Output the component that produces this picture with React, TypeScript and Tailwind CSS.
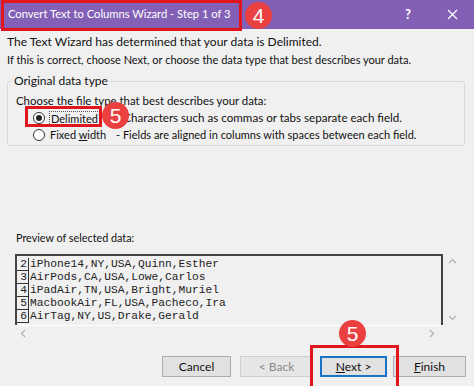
import React from "react";

const rows = [
  ["2", "iPhone14,NY,USA,Quinn,Esther"],
  ["3", "AirPods,CA,USA,Lowe,Carlos"],
  ["4", "iPadAir,TN,USA,Bright,Muriel"],
  ["5", "MacbookAir,FL,USA,Pacheco,Ira"],
  ["6", "AirTag,NY,US,Drake,Gerald"],
];

function Badge({ n, className }: { n: string; className: string }) {
  return (
    <div
      className={`absolute w-[27px] h-[27px] rounded-full bg-[#ea4040] text-white flex items-center justify-center text-[21px] leading-none ${className}`}
      style={{ fontFamily: '"Liberation Sans", Arial, sans-serif' }}
    >
      {n}
    </div>
  );
}

function Radio({ checked }: { checked?: boolean }) {
  return (
    <div className="w-[12px] h-[12px] rounded-full border border-[#333] bg-white flex items-center justify-center shrink-0">
      {checked && <div className="w-[6px] h-[6px] rounded-full bg-[#222]" />}
    </div>
  );
}

export default function App() {
  return (
    <div
      className="relative w-[474px] h-[386px] overflow-hidden bg-[#f0f0f0] text-[#111] flex flex-col"
      style={{ fontFamily: 'Lato, "Noto Sans", sans-serif' }}
    >
      {/* title bar */}
      <div className="h-[29px] bg-[#8360b6] flex items-center text-white shrink-0">
        <div className="pl-[8px] text-[11.2px]">Convert Text to Columns Wizard - Step 1 of 3</div>
        <div className="ml-auto flex items-center">
          <span className="text-[13px] font-bold mr-[36px]">?</span>
          <svg width="11" height="11" viewBox="0 0 11 11" className="mr-[16px]">
            <path d="M1 1L10 10M10 1L1 10" stroke="white" strokeWidth="1.2" />
          </svg>
        </div>
      </div>

      <div className="flex flex-col px-[7px] text-[12px] leading-[18px]">
        <div className="mt-[4px]">The Text Wizard has determined that your data is Delimited.</div>
        <div className="text-[11px]">If this is correct, choose Next, or choose the data type that best describes your data.</div>

        {/* group box */}
        <div className="relative mt-[12px] mr-[2px] h-[65px] border border-[#d9d9d9] rounded-[2px] pt-[10px] pl-[8px]">
          <div className="absolute -top-[10px] left-[4px] bg-[#f0f0f0] px-[2px]">Original data type</div>
          <div className="text-[11.4px]">Choose the file type that best describes your data:</div>
          <div className="flex items-center h-[16px] pl-[17px]">
            <Radio checked />
            <span className="ml-[4px] w-[51px] border border-dotted border-[#555] px-[1px] leading-[13px] text-[11px]">
              <span className="underline">D</span>elimited
            </span>
            <span className="ml-[16px] text-[11.6px]">- Characters such as commas or tabs separate each field.</span>
          </div>
          <div className="flex items-center h-[18px] pl-[17px] text-[11px]">
            <Radio />
            <span className="ml-[5px] w-[66px]">
              Fixed <span className="underline">w</span>idth
            </span>
            <span>- Fields are aligned in columns with spaces between each field.</span>
          </div>
        </div>

        <div className="mt-[83px] pl-[9px] text-[10.8px]">Preview of selected data:</div>

        {/* preview */}
        <div className="flex mt-[7px] pl-[8px]">
          <div className="flex flex-col">
            <div className="w-[428px] h-[71px] border-t-2 border-x-2 border-[#444] bg-[#f0f0f0] pt-[2px]">
              {rows.map(([n, t]) => (
                <div
                  key={n}
                  className="flex h-[13px] leading-[13px] text-[11.25px] text-[#222]"
                  style={{ fontFamily: '"Liberation Mono", "Courier New", monospace' }}
                >
                  <span className="w-[12px] border-r border-b border-[#333] text-right pr-[1px] box-border">{n}</span>
                  <span className="pl-[1px]">{t}</span>
                </div>
              ))}
            </div>
            <div className="h-[16px] flex items-center justify-between px-[5px] border-t border-white">
              <svg width="6" height="9" viewBox="0 0 6 9"><path d="M5 1L1.5 4.5L5 8" stroke="#b0b0b0" strokeWidth="1.2" fill="none" /></svg>
              <svg width="6" height="9" viewBox="0 0 6 9" className="mr-[3px]"><path d="M1 1L4.5 4.5L1 8" stroke="#b0b0b0" strokeWidth="1.2" fill="none" /></svg>
            </div>
          </div>
          <div className="w-[17px] h-[71px] flex flex-col items-center justify-between py-[4px] ml-[1px]">
            <svg width="9" height="6" viewBox="0 0 9 6"><path d="M1 5L4.5 1.5L8 5" stroke="#b0b0b0" strokeWidth="1.2" fill="none" /></svg>
            <svg width="9" height="6" viewBox="0 0 9 6"><path d="M1 1L4.5 4.5L8 1" stroke="#b0b0b0" strokeWidth="1.2" fill="none" /></svg>
          </div>
        </div>

        {/* buttons */}
        <div className="flex justify-end mt-[15px] pr-[1px] text-[12px]">
          <div className="w-[69px] h-[21px] border border-[#adadad] bg-[#e1e1e1] flex items-center justify-center">Cancel</div>
          <div className="ml-[9px] w-[73px] h-[21px] border border-[#cfcfcf] bg-[#e6e6e6] flex items-center justify-center text-[#8a8a8a]">&lt; Back</div>
          <div className="ml-[7px] w-[67px] h-[21px] border-2 border-[#1a73c9] bg-[#e1e1e1] flex items-center justify-center"><span className="underline">N</span>ext &gt;</div>
          <div className="ml-[6px] w-[73px] h-[21px] border border-[#adadad] bg-[#e1e1e1] flex items-center justify-center"><span className="underline">F</span>inish</div>
        </div>
      </div>

      {/* overlay highlights */}
      <div className="absolute left-[1px] top-0 w-[241px] h-[31px] border-[3px] border-[#e0161e]" />
      <Badge n="4" className="left-[245px] top-[2px]" />
      <div className="absolute left-[25px] top-[106px] w-[77px] h-[21px] border-[3px] border-[#e0161e]" />
      <Badge n="5" className="left-[102px] top-[102px]" />
      <div className="absolute left-[310px] top-[345px] w-[89px] h-[45px] border-[3px] border-[#e0161e]" />
      <Badge n="5" className="left-[339px] top-[320px]" />
    </div>
  );
}
